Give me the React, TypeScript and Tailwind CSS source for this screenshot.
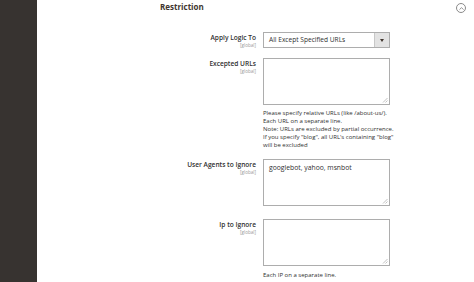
import { ChevronUp } from "lucide-react";

const font = { fontFamily: '"Open Sans", "Noto Sans", sans-serif' };

function Label({ text }: { text: string }) {
  return (
    <div className="w-[226px] shrink-0 pt-[1px] pr-[7px] text-right">
      <div className="text-[6.6px] font-semibold leading-[9px] text-[#303030]">{text}</div>
      <div className="text-[4.6px] leading-[6px] text-[#9a9a9a]">[global]</div>
    </div>
  );
}

function Grip() {
  return (
    <svg className="absolute bottom-[1px] right-[1px]" width="6" height="6" viewBox="0 0 6 6">
      <path d="M5.5 1 L1 5.5 M5.5 3.5 L3.5 5.5" stroke="#a8a8a8" strokeWidth="0.7" />
    </svg>
  );
}

export default function App() {
  return (
    <div className="flex h-[282px] w-[474px] overflow-hidden bg-white" style={font}>
      <div className="h-full w-[37px] shrink-0 bg-[#373330]" />
      <div className="relative flex-1">
        <div className="absolute right-[8px] top-[3px] flex h-[10px] w-[10px] items-center justify-center rounded-full border border-[#8a8a8a]">
          <ChevronUp className="h-[7px] w-[7px] text-[#6a6a6a]" strokeWidth={2.5} />
        </div>
        <div className="pl-[123px] pt-[1px] text-[8px] font-bold leading-[12px] text-[#41362f]">
          Restriction
        </div>

        <div className="mt-[19px] flex">
          <Label text="Apply Logic To" />
          <div className="flex h-[16px] w-[127px] border border-[#adadad]">
            <div className="flex flex-1 items-center pl-[5px] text-[6.6px] text-[#303030]">
              All Except Specified URLs
            </div>
            <div className="flex w-[15px] items-center justify-center border-l border-[#c8c8c8] bg-[#e3e3e3]">
              <svg width="4" height="3" viewBox="0 0 4 3">
                <path d="M0 0 H4 L2 3 Z" fill="#41362f" />
              </svg>
            </div>
          </div>
        </div>

        <div className="mt-[10px] flex">
          <Label text="Excepted URLs" />
          <div className="w-[127px]">
            <div className="relative h-[47px] border border-[#adadad]">
              <Grip />
            </div>
            <div className="whitespace-nowrap pt-[4px] text-[6px] leading-[8px] text-[#303030]">
              Please specify relative URLs (like /about-us/).
              <br />
              Each URL on a separate line.
              <br />
              Note: URLs are excluded by partial occurrence.
              <br />
              If you specify "blog", all URL's containing "blog"
              <br />
              will be excluded
            </div>
          </div>
        </div>

        <div className="mt-[10px] flex">
          <Label text="User Agents to Ignore" />
          <div className="relative h-[47px] w-[127px] border border-[#adadad] px-[5px] pt-[3px] text-[6.8px] leading-[10px] text-[#303030]">
            googlebot, yahoo, msnbot
            <Grip />
          </div>
        </div>

        <div className="mt-[13px] flex">
          <Label text="Ip to Ignore" />
          <div className="w-[127px]">
            <div className="relative h-[47px] border border-[#adadad]">
              <Grip />
            </div>
            <div className="pt-[5px] text-[6px] leading-[8px] text-[#303030]">
              Each IP on a separate line.
            </div>
          </div>
        </div>
      </div>
    </div>
  );
}
